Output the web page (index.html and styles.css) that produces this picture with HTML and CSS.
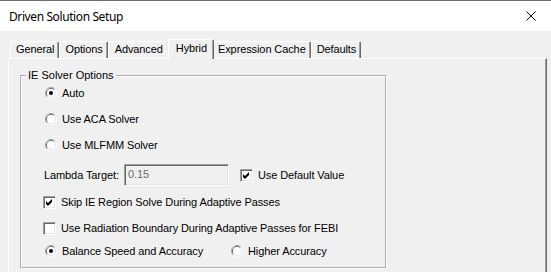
FILE: index.html
```html
<!DOCTYPE html>
<html>
<head>
<meta charset="utf-8">
<title>Driven Solution Setup</title>
<link rel="stylesheet" href="styles.css">
</head>
<body>
<div class="window">
  <div class="titlebar">
    <span class="title">Driven Solution Setup</span>
    <svg class="close" width="10" height="10" viewBox="0 0 10 10"><path d="M0.5 0.5 L9.5 9.5 M9.5 0.5 L0.5 9.5" stroke="#000" stroke-width="1" fill="none"/></svg>
  </div>
  <div class="body">
    <div class="tabs">
      <div class="tab">General</div>
      <div class="tab">Options</div>
      <div class="tab advanced">Advanced</div>
      <div class="tab selected">Hybrid</div>
      <div class="tab">Expression Cache</div>
      <div class="tab">Defaults</div>
    </div>
    <div class="panel">
      <fieldset class="group">
        <legend>IE Solver Options</legend>
        <div class="group-body">
          <label class="row r1"><svg class="radio" width="12" height="12" viewBox="0 0 12 12"><path d="M2.11 9.89 A5.5 5.5 0 0 1 9.89 2.11" stroke="#a0a0a0" fill="none"/><path d="M9.89 2.11 A5.5 5.5 0 0 1 2.11 9.89" stroke="#fff" fill="none"/><path d="M2.82 9.18 A4.5 4.5 0 0 1 9.18 2.82" stroke="#696969" fill="none"/><path d="M9.18 2.82 A4.5 4.5 0 0 1 2.82 9.18" stroke="#e3e3e3" fill="none"/><circle cx="6" cy="6" r="4" fill="#fff"/><circle cx="6" cy="6" r="2" fill="#000"/></svg><span>Auto</span></label>
          <label class="row r2"><svg class="radio" width="12" height="12" viewBox="0 0 12 12"><path d="M2.11 9.89 A5.5 5.5 0 0 1 9.89 2.11" stroke="#a0a0a0" fill="none"/><path d="M9.89 2.11 A5.5 5.5 0 0 1 2.11 9.89" stroke="#fff" fill="none"/><path d="M2.82 9.18 A4.5 4.5 0 0 1 9.18 2.82" stroke="#696969" fill="none"/><path d="M9.18 2.82 A4.5 4.5 0 0 1 2.82 9.18" stroke="#e3e3e3" fill="none"/><circle cx="6" cy="6" r="4" fill="#fff"/></svg><span>Use ACA Solver</span></label>
          <label class="row r3"><svg class="radio" width="12" height="12" viewBox="0 0 12 12"><path d="M2.11 9.89 A5.5 5.5 0 0 1 9.89 2.11" stroke="#a0a0a0" fill="none"/><path d="M9.89 2.11 A5.5 5.5 0 0 1 2.11 9.89" stroke="#fff" fill="none"/><path d="M2.82 9.18 A4.5 4.5 0 0 1 9.18 2.82" stroke="#696969" fill="none"/><path d="M9.18 2.82 A4.5 4.5 0 0 1 2.82 9.18" stroke="#e3e3e3" fill="none"/><circle cx="6" cy="6" r="4" fill="#fff"/></svg><span>Use MLFMM Solver</span></label>
          <div class="row r4">
            <span class="lambda-label">Lambda Target:</span>
            <div class="input">0.15</div>
            <label class="check-item default-value"><span class="checkbox checked"><svg width="9" height="9" viewBox="0 0 9 9"><path d="M1 3 L3 5 L7 1 L7 4 L3 8 L1 6 Z" fill="#000"/></svg></span><span>Use Default Value</span></label>
          </div>
          <label class="row r5"><span class="checkbox checked"><svg width="9" height="9" viewBox="0 0 9 9"><path d="M1 3 L3 5 L7 1 L7 4 L3 8 L1 6 Z" fill="#000"/></svg></span><span>Skip IE Region Solve During Adaptive Passes</span></label>
          <label class="row r6"><span class="checkbox"></span><span>Use Radiation Boundary During Adaptive Passes for FEBI</span></label>
          <div class="row r7">
            <label class="radio-item balance"><svg class="radio" width="12" height="12" viewBox="0 0 12 12"><path d="M2.11 9.89 A5.5 5.5 0 0 1 9.89 2.11" stroke="#a0a0a0" fill="none"/><path d="M9.89 2.11 A5.5 5.5 0 0 1 2.11 9.89" stroke="#fff" fill="none"/><path d="M2.82 9.18 A4.5 4.5 0 0 1 9.18 2.82" stroke="#696969" fill="none"/><path d="M9.18 2.82 A4.5 4.5 0 0 1 2.82 9.18" stroke="#e3e3e3" fill="none"/><circle cx="6" cy="6" r="4" fill="#fff"/><circle cx="6" cy="6" r="2" fill="#000"/></svg><span>Balance Speed and Accuracy</span></label>
            <label class="radio-item"><svg class="radio" width="12" height="12" viewBox="0 0 12 12"><path d="M2.11 9.89 A5.5 5.5 0 0 1 9.89 2.11" stroke="#a0a0a0" fill="none"/><path d="M9.89 2.11 A5.5 5.5 0 0 1 2.11 9.89" stroke="#fff" fill="none"/><path d="M2.82 9.18 A4.5 4.5 0 0 1 9.18 2.82" stroke="#696969" fill="none"/><path d="M9.18 2.82 A4.5 4.5 0 0 1 2.82 9.18" stroke="#e3e3e3" fill="none"/><circle cx="6" cy="6" r="4" fill="#fff"/></svg><span>Higher Accuracy</span></label>
          </div>
        </div>
      </fieldset>
    </div>
  </div>
</div>
</body>
</html>
```

FILE: styles.css
```css
html, body {
  margin: 0;
  padding: 0;
  background: #f0f0f0;
}
.window {
  width: 551px;
  height: 272px;
  overflow: hidden;
  font-family: "Liberation Sans", Arial, sans-serif;
  font-size: 11px;
  color: #000;
  background: #f0f0f0;
}
.titlebar {
  height: 30px;
  background: #fff;
  border-top: 1px solid #6e6e6e;
  display: flex;
  align-items: center;
  justify-content: space-between;
  padding: 0 15px 0 9px;
}
.title {
  font-family: "Noto Sans", sans-serif;
  font-size: 12px;
  letter-spacing: -0.4px;
  color: #000;
}
.close {
  display: block;
}
.body {
  padding: 8px 0 0 8px;
}
.tabs {
  display: flex;
  align-items: flex-end;
  height: 19px;
  padding-left: 2px;
}
.tab {
  height: 16px;
  line-height: 15px;
  padding: 0 4px 0 5px;
  border-top: 1px solid #fff;
  border-left: 1px solid #fff;
  border-right: 1px solid #696969;
  box-shadow: inset -1px 0 0 #a0a0a0;
  border-radius: 2px 2px 0 0;
  background: #f0f0f0;
  white-space: nowrap;
  letter-spacing: -0.1px;
}
.tab.advanced {
  padding: 0 6px 0 6px;
}
.tab.selected {
  height: 19px;
  line-height: 16px;
  margin: 0 -2px -1px -2px;
  padding: 0 6px 0 7px;
  position: relative;
  z-index: 1;
}
.panel {
  width: 539px;
  height: 220px;
  box-sizing: border-box;
  border-top: 1px solid #fff;
  border-left: 1px solid #fff;
  border-right: 1px solid #696969;
  box-shadow: inset -1px 0 0 #a0a0a0;
  padding: 10px 0 0 11px;
}
.group {
  margin: 0;
  padding: 0;
  width: 367px;
  height: 200px;
  box-sizing: border-box;
  border: 2px groove #fff;
}
.group legend {
  padding: 0 2px;
  margin-left: 4px;
  line-height: 13px;
}
.group-body {
  display: flex;
  flex-direction: column;
  padding-left: 21px;
  letter-spacing: -0.1px;
}
.row {
  display: flex;
  align-items: center;
  height: 16px;
  white-space: nowrap;
}
.r1 { margin-top: 3px; }
.r2 { margin-top: 10px; }
.r3 { margin-top: 10px; }
.r4 { margin-top: 11px; height: 22px; }
.r5 { margin-top: 8px; }
.r6 { margin-top: 10px; }
.r7 { margin-top: 7px; }
.radio {
  display: block;
  flex: none;
  margin: 0 5px 0 2px;
}
.radio-item {
  display: flex;
  align-items: center;
}
.radio-item.balance {
  width: 186px;
}
.checkbox {
  width: 13px;
  height: 13px;
  box-sizing: border-box;
  flex: none;
  margin-right: 5px;
  background: #fff;
  border-top: 1px solid #a0a0a0;
  border-left: 1px solid #a0a0a0;
  border-right: 1px solid #fff;
  border-bottom: 1px solid #fff;
  box-shadow: inset 1px 1px 0 #696969, inset -1px -1px 0 #e3e3e3;
  display: flex;
  align-items: center;
  justify-content: center;
}
.checkbox svg {
  display: block;
}
.lambda-label {
  width: 80px;
  margin-left: 1px;
}
.input {
  width: 105px;
  height: 22px;
  box-sizing: border-box;
  border-top: 1px solid #a0a0a0;
  border-left: 1px solid #a0a0a0;
  border-right: 1px solid #fff;
  border-bottom: 1px solid #fff;
  box-shadow: inset 1px 1px 0 #696969, inset -1px -1px 0 #e3e3e3;
  color: #6d6d6d;
  padding: 2px 3px;
  line-height: 15px;
}
.check-item {
  display: flex;
  align-items: center;
}
.default-value {
  margin-left: 11px;
}
```
